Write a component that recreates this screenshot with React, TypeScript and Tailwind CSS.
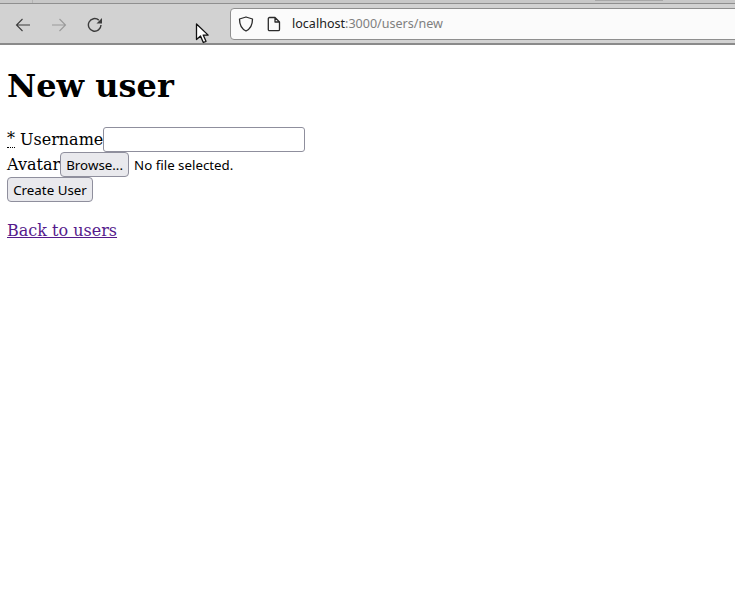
export default function App() {
  return (
    <div className="min-h-[609px] bg-white text-black font-['DejaVu_Serif',serif] text-base overflow-hidden relative">
      <div className="h-[4px] bg-[#c8c8c8] border-b border-[#8f8f8f] relative">
        <div className="absolute left-[32px] top-0 h-[3px] w-px bg-[#b4b4b4]" />
        <div className="absolute left-[595px] top-0 h-[1px] w-[68px] bg-[#a8a8a8]" />
      </div>
      <div className="h-[41px] pt-[1px] bg-[#d2d2d2] border-b-2 border-[#8a8a8a] flex items-center">
        <div className="ml-[15px] mt-[2px] flex items-center gap-[20px]">
          <svg width="16" height="16" viewBox="0 0 16 16" fill="none" stroke="#3c3c3c" strokeWidth="1.1"><path d="M1.500 8H15M7.500 2 1.500 8l6 6" /></svg>
          <svg width="16" height="16" viewBox="0 0 16 16" fill="none" stroke="#9a9a9a" strokeWidth="1.1"><path d="M1 8h13.500M8.500 2l6 6-6 6" /></svg>
          <svg width="16" height="16" viewBox="0 0 16 16" fill="none" stroke="#3c3c3c" strokeWidth="1.400"><path d="M14 8A6.300 6.300 0 1 1 11.800 3.100" /><path d="M15 1v5.500H9.500z" fill="#3c3c3c" stroke="none" /></svg>
        </div>
        <div className="ml-[127px] h-[32px] flex-1 -mr-[4px] bg-[#fbfbfb] border border-[#8f8f8f] rounded-[4px] flex items-center font-['Noto_Sans',sans-serif] text-[12.550px]">
          <svg className="ml-[7px]" width="16" height="16" viewBox="0 0 16 16" fill="none" stroke="#2b2b2b" strokeWidth="1.300"><path d="M8 1 14.500 3c0 6-1.500 9.600-6.500 12C3 12.600 1.500 9 1.500 3z" strokeLinejoin="round" /></svg>
          <svg className="ml-[13px]" width="14" height="16" viewBox="0 0 14 16" fill="none" stroke="#2b2b2b" strokeWidth="1.300"><path d="M2.500 1.500h5.500l4.500 4.500v7.500a1.200 1.200 0 0 1-1.200 1.200H2.500a1.200 1.200 0 0 1-1.200-1.200V2.700a1.200 1.200 0 0 1 1.200-1.200zM8 1.500V6h4.500" strokeLinejoin="round" /></svg>
          <span className="ml-[11px] mt-[1px] text-[#222]">localhost<span className="text-[#808080]">:3000/users/new</span></span>
        </div>
      </div>
      <div className="px-[7px]">
        <h1 className="text-[32px] font-bold leading-[38px] mt-[22px] mb-[22px]">New user</h1>
        <form>
          <div className="h-[25px] flex items-center">
            <abbr title="required" className="no-underline leading-[16px] border-b border-dotted border-black">*</abbr>
            <label className="ml-[5px]">Username</label>
            <input type="text" className="w-[202px] h-[25px] bg-white border border-[#8f8f9d] rounded-[3px]" />
          </div>
          <div className="h-[25px] flex items-center">
            <label>Avatar</label>
            <span className="h-[25px] w-[69px] pt-[2px] flex items-center justify-center bg-[#e9e9ed] border border-[#8f8f9d] rounded-[4px] font-['Noto_Sans',sans-serif] text-[13.333px]">Browse...</span>
            <span className="ml-[5px] mt-[2px] font-['Noto_Sans',sans-serif] text-[13.300px]">No file selected.</span>
          </div>
          <div className="h-[25px] flex items-center">
            <button type="button" className="h-[25px] w-[86px] pt-[2px] bg-[#e9e9ed] border border-[#8f8f9d] rounded-[4px] font-['Noto_Sans',sans-serif] text-[13.333px]">Create User</button>
          </div>
        </form>
        <a href="#" className="block mt-[19px] text-[#551a8b] underline leading-[19px]">Back to users</a>
      </div>
      <svg className="absolute left-[195px] top-[23px]" width="14" height="21" viewBox="0 0 14 21"><path d="M1.500 1v15.500l4-3.500 2.800 6.500 2.700-1.200-2.800-6.200h5z" fill="#fff" stroke="#111" strokeWidth="1.300" strokeLinejoin="round" /></svg>
    </div>
  );
}
